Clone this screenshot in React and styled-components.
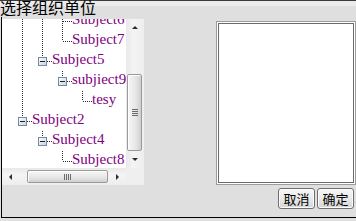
import React, { useLayoutEffect, useRef } from 'react';
import styled, { createGlobalStyle } from 'styled-components';

const Global = createGlobalStyle`
  html, body { margin: 0; padding: 0; background: #dfdfdf; }
  body { width: 356px; height: 221px; overflow: hidden; font-family: "Noto Sans CJK SC", sans-serif; }
  * { box-sizing: border-box; }
`;

const Page = styled.div`
  width: 356px;
  height: 221px;
  display: flex;
  flex-direction: column;
`;

const Header = styled.div`
  flex: none;
  height: 17px;
  background: linear-gradient(#3a3a3a 0 1px, #ececec 1px 6px, #dfdfdf 6px);
`;

const Title = styled.div`
  font-family: "Noto Sans CJK SC", sans-serif;
  font-size: 16px;
  line-height: 15px;
  color: #000;
  white-space: nowrap;
`;

const Body = styled.div`
  flex: none;
  height: 201px;
  margin-left: 1px;
  border-left: 1px solid #000;
  border-bottom: 1px solid #000;
  display: flex;
  align-items: flex-start;
`;

const TreePanel = styled.div`
  flex: none;
  margin-top: 2px;
  display: grid;
  grid-template-columns: 124px 18px;
  grid-template-rows: 149px 17px;
`;

const Viewport = styled.div`
  background: #fff;
  overflow: auto;
  scrollbar-width: none;
  &::-webkit-scrollbar { display: none; }
`;

const TreeContent = styled.div`
  width: 146px;
  padding: 0;
`;

const Row = styled.div`
  display: flex;
  align-items: flex-start;
  height: 20px;
  white-space: nowrap;
`;

const Label = styled.span`
  font-family: "Liberation Serif", "Times New Roman", serif;
  font-size: 15px;
  line-height: 16px;
  color: #800080;
  cursor: pointer;
`;

const CellSvg = styled.svg`
  flex: none;
  display: block;
  width: 20px;
  height: 20px;
`;

const DOT = { stroke: '#2a2a2a', strokeWidth: 1, strokeDasharray: '1 1' };

function Cell({ kind, exp }) {
  const lines = [];
  if (kind === 'I') {
    lines.push(<line key="v" x1="10.5" y1="0" x2="10.5" y2="20" {...DOT} />);
  } else if (kind === 'T' || kind === 'L' || kind === 'R') {
    if (exp) {
      if (kind !== 'R') lines.push(<line key="va" x1="10.5" y1="0" x2="10.5" y2="6" {...DOT} />);
      if (kind === 'T') lines.push(<line key="vb" x1="10.5" y1="15" x2="10.5" y2="20" {...DOT} />);
      lines.push(<line key="h" x1="15" y1="10.5" x2="20" y2="10.5" {...DOT} />);
    } else {
      lines.push(
        <line key="v" x1="10.5" y1="0" x2="10.5" y2={kind === 'T' ? 20 : 10} {...DOT} />
      );
      lines.push(<line key="h" x1="11" y1="10.5" x2="20" y2="10.5" {...DOT} />);
    }
  }
  return (
    <CellSvg viewBox="0 0 20 20" shapeRendering="crispEdges">
      <defs>
        <linearGradient id="expg" x1="0" y1="0" x2="1" y2="1">
          <stop offset="0" stopColor="#ffffff" />
          <stop offset="1" stopColor="#c9d2de" />
        </linearGradient>
      </defs>
      {lines}
      {exp && (
        <g>
          <rect x="6.5" y="6.5" width="8" height="8" fill="url(#expg)" stroke="#7389a6" />
          <line x1="8" y1="10.5" x2="13" y2="10.5" stroke="#1e1e1e" />
        </g>
      )}
    </CellSvg>
  );
}

const rows = [
  { guides: [], kind: 'R', exp: true, label: '组织机构' },
  { guides: [' '], kind: 'T', exp: true, label: 'Subject1' },
  { guides: [' ', 'I'], kind: 'T', exp: true, label: 'Subject3' },
  { guides: [' ', 'I', 'I'], kind: 'T', label: 'Subject6' },
  { guides: [' ', 'I', 'I'], kind: 'L', label: 'Subject7' },
  { guides: [' ', 'I'], kind: 'L', exp: true, label: 'Subject5' },
  { guides: [' ', 'I', ' '], kind: 'L', exp: true, label: 'subjiect9' },
  { guides: [' ', 'I', ' ', ' '], kind: 'L', label: 'tesy' },
  { guides: [' '], kind: 'L', exp: true, label: 'Subject2' },
  { guides: [' ', ' '], kind: 'L', exp: true, label: 'Subject4' },
  { guides: [' ', ' ', ' '], kind: 'L', label: 'Subject8' },
];

/* ---------- scrollbars ---------- */
const VScroll = styled.div`
  display: flex;
  flex-direction: column;
  background: linear-gradient(to right, #e9e9e9, #f4f4f4 40%, #eeeeee);
`;

const HScroll = styled.div`
  display: flex;
  flex-direction: row;
  background: linear-gradient(#e9e9e9, #f4f4f4 40%, #eeeeee);
`;

const Corner = styled.div`
  background: #efefef;
`;

const ArrowBtn = styled.div`
  flex: none;
  width: ${(p) => (p.$vertical ? '100%' : '17px')};
  height: ${(p) => (p.$vertical ? '17px' : '100%')};
  display: flex;
  align-items: center;
  justify-content: center;
`;

const Track = styled.div`
  flex: 1;
  display: flex;
  flex-direction: ${(p) => (p.$vertical ? 'column' : 'row')};
  align-items: stretch;
`;

const Thumb = styled.div`
  flex: none;
  ${(p) =>
    p.$vertical
      ? `margin-top: ${p.$start}px; height: ${p.$size}px; margin-left: 1px; margin-right: 2px;
         background: linear-gradient(to right, #f6f6f6, #e6e6e6 60%, #cfcfcf);`
      : `margin-left: ${p.$start}px; width: ${p.$size}px; margin-top: 2px; margin-bottom: 2px;
         background: linear-gradient(#f6f6f6, #e6e6e6 60%, #cfcfcf);`}
  border: 1px solid #9a9a9a;
  border-radius: 2px;
  box-shadow: inset 1px 1px 0 #ffffff;
  display: flex;
  align-items: center;
  justify-content: center;
`;

const Grip = styled.svg`
  display: block;
`;

function Arrow({ dir }) {
  const pts = {
    up: '0,4 3,1 6,4',
    down: '0,1 3,4 6,1',
    left: '4,0 1,3 4,6',
    right: '1,0 4,3 1,6',
  }[dir];
  const w = dir === 'up' || dir === 'down' ? 6 : 5;
  const h = dir === 'up' || dir === 'down' ? 5 : 6;
  return (
    <svg width={w} height={h} viewBox={`0 0 ${w} ${h}`}>
      <polygon points={pts} fill="#2c2c2c" />
    </svg>
  );
}

/* ---------- right side ---------- */
const RightCol = styled.div`
  flex: 1;
  align-self: stretch;
  display: flex;
  flex-direction: column;
  align-items: flex-end;
  padding-top: 4px;
`;

const SelectedBox = styled.div`
  width: 140px;
  height: 164px;
  margin-right: 0px;
  background: #fff;
  border: 1px solid #9c9c9c;
  box-shadow: inset 0 0 0 1px #ffffff, inset 0 0 0 2px #6c6c6c;
`;

const Buttons = styled.div`
  display: flex;
  gap: 2px;
  margin-top: 3px;
  margin-right: 2px;
`;

const Button = styled.button`
  width: 37px;
  height: 21px;
  padding: 0;
  margin: 0;
  font-family: "Noto Sans CJK SC", sans-serif;
  font-size: 13px;
  line-height: 19px;
  color: #000;
  background: linear-gradient(#f7f7f7, #e9e9e9 50%, #d5d5d5);
  border: 1px solid #6e6e6e;
  border-radius: 3px;
  box-shadow: inset 0 0 0 1px #fbfbfb;
`;

export default function App() {
  const vp = useRef(null);
  useLayoutEffect(() => {
    if (vp.current) {
      vp.current.scrollTop = 68;
      vp.current.scrollLeft = 10;
    }
  }, []);

  return (
    <Page>
      <Global />
      <Header>
        <Title>选择组织单位</Title>
      </Header>
      <Body>
        <TreePanel>
          <Viewport ref={vp}>
            <TreeContent>
              {rows.map((r, i) => (
                <Row key={i}>
                  {r.guides.map((g, j) => (
                    <Cell key={j} kind={g === 'I' ? 'I' : 'blank'} />
                  ))}
                  <Cell kind={r.kind} exp={r.exp} />
                  <Label>{r.label}</Label>
                </Row>
              ))}
            </TreeContent>
          </Viewport>
          <VScroll>
            <ArrowBtn $vertical>
              <Arrow dir="up" />
            </ArrowBtn>
            <Track $vertical>
              <Thumb $vertical $start={38} $size={77}>
                <Grip width="6" height="7" viewBox="0 0 6 7" shapeRendering="crispEdges">
                  {[0, 2, 4, 6].map((y) => (
                    <line key={y} x1="0" y1={y + 0.5} x2="6" y2={y + 0.5} stroke="#6a6a6a" />
                  ))}
                </Grip>
              </Thumb>
            </Track>
            <ArrowBtn $vertical>
              <Arrow dir="down" />
            </ArrowBtn>
          </VScroll>
          <HScroll>
            <ArrowBtn>
              <Arrow dir="left" />
            </ArrowBtn>
            <Track>
              <Thumb $start={8} $size={81}>
                <Grip width="7" height="6" viewBox="0 0 7 6" shapeRendering="crispEdges">
                  {[0, 2, 4, 6].map((x) => (
                    <line key={x} x1={x + 0.5} y1="0" x2={x + 0.5} y2="6" stroke="#6a6a6a" />
                  ))}
                </Grip>
              </Thumb>
            </Track>
            <ArrowBtn>
              <Arrow dir="right" />
            </ArrowBtn>
          </HScroll>
          <Corner />
        </TreePanel>
        <RightCol>
          <SelectedBox />
          <Buttons>
            <Button>取消</Button>
            <Button>确定</Button>
          </Buttons>
        </RightCol>
      </Body>
    </Page>
  );
}
